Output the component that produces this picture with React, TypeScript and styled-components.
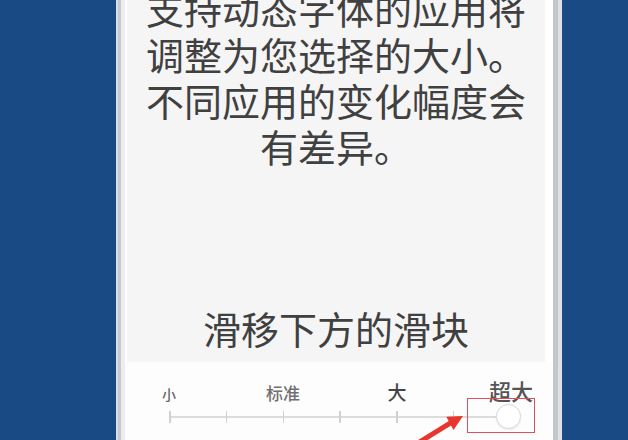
import React from "react";
import styled, { createGlobalStyle } from "styled-components";

const GlobalStyle = createGlobalStyle`
  html, body {
    margin: 0;
    padding: 0;
    width: 628px;
    height: 440px;
    overflow: hidden;
    background: #1a4a84;
    font-family: "Noto Sans CJK SC", "Noto Sans", sans-serif;
  }
`;

const Page = styled.div`
  width: 628px;
  height: 440px;
  display: flex;
  padding-left: 116px;
  box-sizing: border-box;
  background: #1a4a84;
`;

const Phone = styled.div`
  width: 446px;
  height: 440px;
  box-sizing: border-box;
  padding: 0 9px;
  display: flex;
  background: linear-gradient(
    to right,
    #d9dfe7 0px,
    #d9dfe7 2px,
    #c6c9ce 2px,
    #c6c9ce 5px,
    #ededed 5px,
    #ededed 9px,
    #ffffff 9px,
    #ffffff 437px,
    #c4c6ca 437px,
    #c4c6ca 442px,
    #dde2e9 442px,
    #dde2e9 446px
  );
`;

const Screen = styled.div`
  flex: 1;
  display: flex;
  flex-direction: column;
  background: #ffffff;
  overflow: hidden;
`;

const Content = styled.div`
  flex: 1;
  display: flex;
  flex-direction: column;
  justify-content: space-between;
  align-items: center;
  background: #f5f5f5;
  margin: 0 8px 0 2px;
  padding-bottom: 11px;
`;

const Description = styled.p`
  margin: -15px 0 0 0;
  font-size: 38px;
  line-height: 46px;
  color: #404040;
  text-align: center;
  font-weight: 400;
`;

const Hint = styled.p`
  margin: 0;
  font-size: 38px;
  line-height: 46px;
  color: #404040;
  text-align: center;
  font-weight: 400;
`;

const Panel = styled.div`
  position: relative;
  height: 78px;
  box-sizing: border-box;
  padding-top: 17px;
  background: #fdfdfd;
`;

const Labels = styled.div`
  display: grid;
  grid-template-columns: repeat(7, 57px);
  align-items: end;
  margin-left: 15.5px;
  height: 22px;
`;

const Label = styled.span<{ $col: number; $size: number; $color: string }>`
  grid-column: ${(p) => p.$col};
  justify-self: center;
  font-size: ${(p) => p.$size}px;
  line-height: 1;
  color: ${(p) => p.$color};
  font-weight: 500;
  white-space: nowrap;
`;

const Track = styled.div`
  position: relative;
  margin: 3px 0 0 44px;
  width: 342px;
  height: 26px;
  display: flex;
  justify-content: space-between;
  align-items: center;
  background: linear-gradient(#dcdcdc, #dcdcdc) center / 100% 2px no-repeat;
`;

const Tick = styled.span`
  width: 1.5px;
  height: 12px;
  background: #d0d0d0;
`;

const Thumb = styled.span`
  position: absolute;
  top: 0;
  right: -10px;
  width: 25px;
  height: 25px;
  box-sizing: border-box;
  border-radius: 50%;
  background: #ffffff;
  border: 1px solid #d8d8d8;
  box-shadow: 0 1px 2px rgba(0, 0, 0, 0.08);
`;

const Highlight = styled.div`
  position: absolute;
  left: 342px;
  top: 36px;
  width: 68px;
  height: 35px;
  box-sizing: border-box;
  border: 1.5px solid #e0505c;
`;

const ArrowSvg = styled.svg`
  position: absolute;
  left: 280px;
  top: 45px;
  overflow: visible;
`;

const labels = [
  { text: "小", col: 1, size: 14, color: "#666666" },
  { text: "标准", col: 3, size: 17, color: "#707070" },
  { text: "大", col: 5, size: 19, color: "#444444" },
  { text: "超大", col: 7, size: 22, color: "#555555" },
];

export default function App() {
  return (
    <>
      <GlobalStyle />
      <Page>
        <Phone>
          <Screen>
            <Content>
              <Description>
                支持动态字体的应用将
                <br />
                调整为您选择的大小。
                <br />
                不同应用的变化幅度会
                <br />
                有差异。
              </Description>
              <Hint>滑移下方的滑块</Hint>
            </Content>
            <Panel>
              <Labels>
                {labels.map((l) => (
                  <Label key={l.text} $col={l.col} $size={l.size} $color={l.color}>
                    {l.text}
                  </Label>
                ))}
              </Labels>
              <Track>
                {Array.from({ length: 7 }).map((_, i) => (
                  <Tick key={i} />
                ))}
                <Thumb />
              </Track>
              <Highlight />
              <ArrowSvg width="80" height="35" viewBox="0 0 80 35">
                <line x1="13" y1="36" x2="46" y2="15.6" stroke="#e8352d" strokeWidth="5" />
                <polygon points="58,9 48.5,22.9 41.3,9.7" fill="#e8352d" />
              </ArrowSvg>
            </Panel>
          </Screen>
        </Phone>
      </Page>
    </>
  );
}
